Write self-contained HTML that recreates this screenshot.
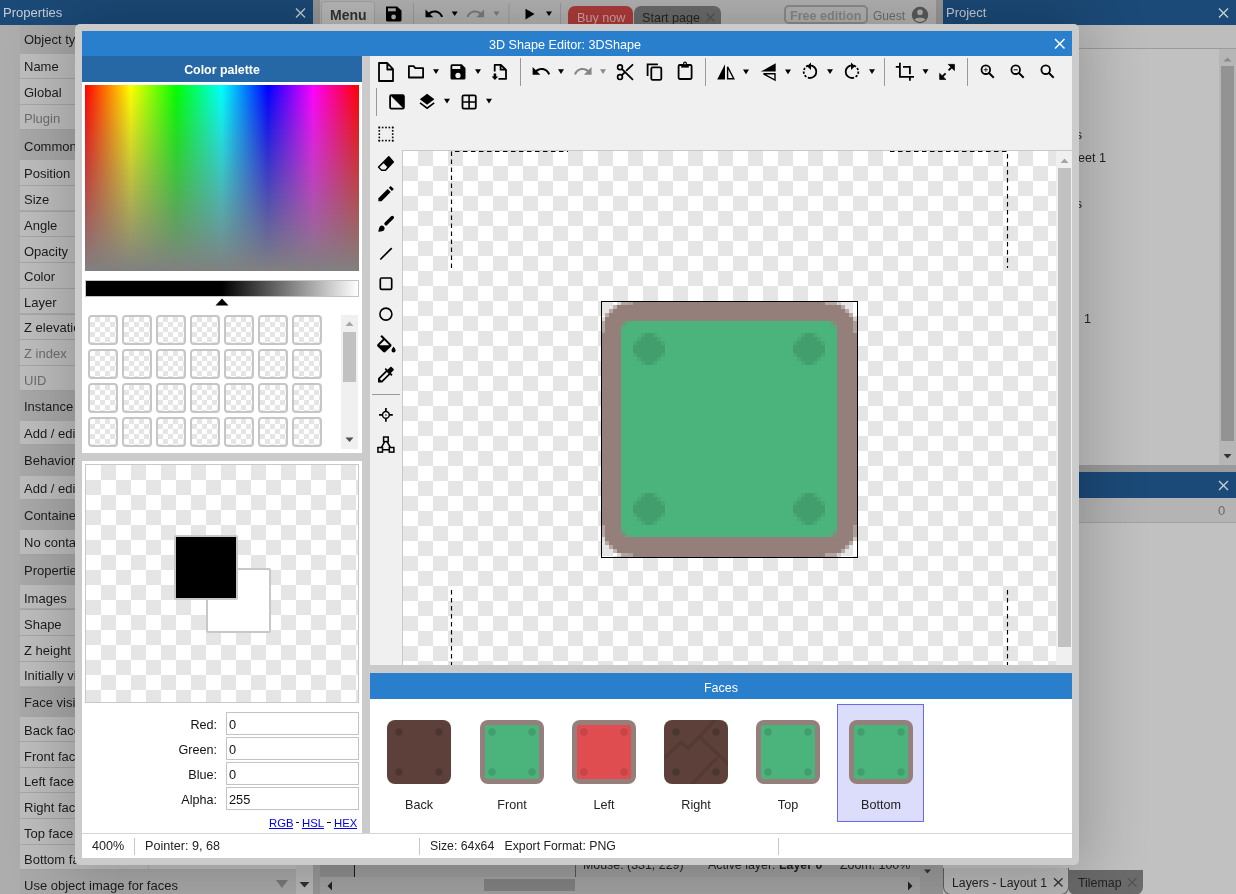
<!DOCTYPE html><html><head><meta charset="utf-8"><title>3D Shape Editor</title><style>
*{box-sizing:border-box;margin:0;padding:0}
html,body{width:1236px;height:894px;overflow:hidden}
body{position:relative;background:#bababa;font-family:"Liberation Sans",sans-serif;font-size:12.5px;color:#111}
.a{position:absolute}
.t{position:absolute;white-space:pre;line-height:1;will-change:transform}
.ph{position:absolute;background:#1b4a78}
.chk15{background:conic-gradient(#e5e5e5 0 25%,#fff 0 50%,#e5e5e5 0 75%,#fff 0) 0 0/30px 30px}
.chk5{background:conic-gradient(#e5e5e5 0 25%,#fff 0 50%,#e5e5e5 0 75%,#fff 0) 0 0/10px 10px}
</style></head><body>
<div class="a" style="left:0px;top:0px;width:313px;height:894px;background:#adadad"></div>
<div class="a" style="left:0px;top:0px;width:313px;height:25px;background:#1b4a78"></div>
<div class="t" style="left:3px;top:6px;color:#c8ced5;font-size:13px">Properties</div>
<div class="a" style="left:20px;top:24.5px;width:276px;height:29.299999999999997px;background:#a9a9a9"></div>
<div class="t" style="left:24px;top:32.9px;color:#1c1c1c;font-size:13px">Object type</div>
<div class="a" style="left:20px;top:53.8px;width:276px;height:24.400000000000006px;background:#bebebe"></div>
<div class="a" style="left:20px;top:78.2px;width:276px;height:1px;background:#a6a6a6"></div>
<div class="a" style="left:148px;top:53.8px;width:1px;height:24.400000000000006px;background:#aaaaaa"></div>
<div class="t" style="left:24px;top:60.3px;color:#1c1c1c;font-size:13px">Name</div>
<div class="a" style="left:20px;top:79.2px;width:276px;height:24.599999999999994px;background:#bebebe"></div>
<div class="a" style="left:20px;top:103.8px;width:276px;height:1px;background:#a6a6a6"></div>
<div class="a" style="left:148px;top:79.2px;width:1px;height:24.599999999999994px;background:#aaaaaa"></div>
<div class="t" style="left:24px;top:86.2px;color:#1c1c1c;font-size:13px">Global</div>
<div class="a" style="left:20px;top:104.8px;width:276px;height:24.60000000000001px;background:#bebebe"></div>
<div class="a" style="left:20px;top:129.4px;width:276px;height:1px;background:#a6a6a6"></div>
<div class="a" style="left:148px;top:104.8px;width:1px;height:24.60000000000001px;background:#aaaaaa"></div>
<div class="t" style="left:24px;top:112.1px;color:#6e6e6e;font-size:13px">Plugin</div>
<div class="a" style="left:20px;top:130.4px;width:276px;height:29.299999999999983px;background:#a9a9a9"></div>
<div class="t" style="left:24px;top:139.9px;color:#1c1c1c;font-size:13px">Common</div>
<div class="a" style="left:20px;top:159.7px;width:276px;height:25.100000000000023px;background:#bebebe"></div>
<div class="a" style="left:20px;top:184.8px;width:276px;height:1px;background:#a6a6a6"></div>
<div class="a" style="left:148px;top:159.7px;width:1px;height:25.100000000000023px;background:#aaaaaa"></div>
<div class="t" style="left:24px;top:166.7px;color:#1c1c1c;font-size:13px">Position</div>
<div class="a" style="left:20px;top:185.8px;width:276px;height:24.69999999999999px;background:#bebebe"></div>
<div class="a" style="left:20px;top:210.5px;width:276px;height:1px;background:#a6a6a6"></div>
<div class="a" style="left:148px;top:185.8px;width:1px;height:24.69999999999999px;background:#aaaaaa"></div>
<div class="t" style="left:24px;top:192.6px;color:#1c1c1c;font-size:13px">Size</div>
<div class="a" style="left:20px;top:211.5px;width:276px;height:24.5px;background:#bebebe"></div>
<div class="a" style="left:20px;top:236px;width:276px;height:1px;background:#a6a6a6"></div>
<div class="a" style="left:148px;top:211.5px;width:1px;height:24.5px;background:#aaaaaa"></div>
<div class="t" style="left:24px;top:219.3px;color:#1c1c1c;font-size:13px">Angle</div>
<div class="a" style="left:20px;top:237px;width:276px;height:25px;background:#bebebe"></div>
<div class="a" style="left:20px;top:262px;width:276px;height:1px;background:#a6a6a6"></div>
<div class="a" style="left:148px;top:237px;width:1px;height:25px;background:#aaaaaa"></div>
<div class="t" style="left:24px;top:244.8px;color:#1c1c1c;font-size:13px">Opacity</div>
<div class="a" style="left:20px;top:263px;width:276px;height:24.69999999999999px;background:#bebebe"></div>
<div class="a" style="left:20px;top:287.7px;width:276px;height:1px;background:#a6a6a6"></div>
<div class="a" style="left:148px;top:263px;width:1px;height:24.69999999999999px;background:#aaaaaa"></div>
<div class="t" style="left:24px;top:270.3px;color:#1c1c1c;font-size:13px">Color</div>
<div class="a" style="left:20px;top:288.7px;width:276px;height:24.80000000000001px;background:#bebebe"></div>
<div class="a" style="left:20px;top:313.5px;width:276px;height:1px;background:#a6a6a6"></div>
<div class="a" style="left:148px;top:288.7px;width:1px;height:24.80000000000001px;background:#aaaaaa"></div>
<div class="t" style="left:24px;top:296.2px;color:#1c1c1c;font-size:13px">Layer</div>
<div class="a" style="left:20px;top:314.5px;width:276px;height:24.399999999999977px;background:#bebebe"></div>
<div class="a" style="left:20px;top:338.9px;width:276px;height:1px;background:#a6a6a6"></div>
<div class="a" style="left:148px;top:314.5px;width:1px;height:24.399999999999977px;background:#aaaaaa"></div>
<div class="t" style="left:24px;top:321.3px;color:#1c1c1c;font-size:13px">Z elevation</div>
<div class="a" style="left:20px;top:339.9px;width:276px;height:24.900000000000034px;background:#bebebe"></div>
<div class="a" style="left:20px;top:364.8px;width:276px;height:1px;background:#a6a6a6"></div>
<div class="a" style="left:148px;top:339.9px;width:1px;height:24.900000000000034px;background:#aaaaaa"></div>
<div class="t" style="left:24px;top:347.2px;color:#6e6e6e;font-size:13px">Z index</div>
<div class="a" style="left:20px;top:365.8px;width:276px;height:24.599999999999966px;background:#bebebe"></div>
<div class="a" style="left:20px;top:390.4px;width:276px;height:1px;background:#a6a6a6"></div>
<div class="a" style="left:148px;top:365.8px;width:1px;height:24.599999999999966px;background:#aaaaaa"></div>
<div class="t" style="left:24px;top:373.6px;color:#6e6e6e;font-size:13px">UID</div>
<div class="a" style="left:20px;top:391.4px;width:276px;height:29.600000000000023px;background:#a9a9a9"></div>
<div class="t" style="left:24px;top:399.8px;color:#1c1c1c;font-size:13px">Instance variables</div>
<div class="a" style="left:20px;top:421px;width:276px;height:23.100000000000023px;background:#bebebe"></div>
<div class="a" style="left:20px;top:444.1px;width:276px;height:1px;background:#a6a6a6"></div>
<div class="a" style="left:148px;top:421px;width:1px;height:23.100000000000023px;background:#aaaaaa"></div>
<div class="t" style="left:24px;top:427.3px;color:#1c1c1c;font-size:13px">Add / edit</div>
<div class="a" style="left:20px;top:445.1px;width:276px;height:30.599999999999966px;background:#a9a9a9"></div>
<div class="t" style="left:24px;top:454.0px;color:#1c1c1c;font-size:13px">Behaviors</div>
<div class="a" style="left:20px;top:475.7px;width:276px;height:23.30000000000001px;background:#bebebe"></div>
<div class="a" style="left:20px;top:499px;width:276px;height:1px;background:#a6a6a6"></div>
<div class="a" style="left:148px;top:475.7px;width:1px;height:23.30000000000001px;background:#aaaaaa"></div>
<div class="t" style="left:24px;top:482.2px;color:#1c1c1c;font-size:13px">Add / edit</div>
<div class="a" style="left:20px;top:500px;width:276px;height:29.799999999999955px;background:#a9a9a9"></div>
<div class="t" style="left:24px;top:508.9px;color:#1c1c1c;font-size:13px">Container</div>
<div class="a" style="left:20px;top:529.8px;width:276px;height:24.200000000000045px;background:#bebebe"></div>
<div class="a" style="left:20px;top:554px;width:276px;height:1px;background:#a6a6a6"></div>
<div class="a" style="left:148px;top:529.8px;width:1px;height:24.200000000000045px;background:#aaaaaa"></div>
<div class="t" style="left:24px;top:536.3px;color:#1c1c1c;font-size:13px">No container</div>
<div class="a" style="left:20px;top:555px;width:276px;height:29.700000000000045px;background:#a9a9a9"></div>
<div class="t" style="left:24px;top:563.7px;color:#1c1c1c;font-size:13px">Properties</div>
<div class="a" style="left:20px;top:584.7px;width:276px;height:23.799999999999955px;background:#bebebe"></div>
<div class="a" style="left:20px;top:608.5px;width:276px;height:1px;background:#a6a6a6"></div>
<div class="a" style="left:148px;top:584.7px;width:1px;height:23.799999999999955px;background:#aaaaaa"></div>
<div class="t" style="left:24px;top:591.9px;color:#1c1c1c;font-size:13px">Images</div>
<div class="a" style="left:20px;top:609.5px;width:276px;height:25.200000000000045px;background:#bebebe"></div>
<div class="a" style="left:20px;top:634.7px;width:276px;height:1px;background:#a6a6a6"></div>
<div class="a" style="left:148px;top:609.5px;width:1px;height:25.200000000000045px;background:#aaaaaa"></div>
<div class="t" style="left:24px;top:617.9px;color:#1c1c1c;font-size:13px">Shape</div>
<div class="a" style="left:20px;top:635.7px;width:276px;height:24.899999999999977px;background:#bebebe"></div>
<div class="a" style="left:20px;top:660.6px;width:276px;height:1px;background:#a6a6a6"></div>
<div class="a" style="left:148px;top:635.7px;width:1px;height:24.899999999999977px;background:#aaaaaa"></div>
<div class="t" style="left:24px;top:643.8px;color:#1c1c1c;font-size:13px">Z height</div>
<div class="a" style="left:20px;top:661.6px;width:276px;height:24.899999999999977px;background:#bebebe"></div>
<div class="a" style="left:20px;top:686.5px;width:276px;height:1px;background:#a6a6a6"></div>
<div class="a" style="left:148px;top:661.6px;width:1px;height:24.899999999999977px;background:#aaaaaa"></div>
<div class="t" style="left:24px;top:668.9px;color:#1c1c1c;font-size:13px">Initially visible</div>
<div class="a" style="left:20px;top:687.5px;width:276px;height:29.5px;background:#a9a9a9"></div>
<div class="t" style="left:24px;top:696.3px;color:#1c1c1c;font-size:13px">Face visibility</div>
<div class="a" style="left:20px;top:717px;width:276px;height:24.200000000000045px;background:#bebebe"></div>
<div class="a" style="left:20px;top:741.2px;width:276px;height:1px;background:#a6a6a6"></div>
<div class="a" style="left:148px;top:717px;width:1px;height:24.200000000000045px;background:#aaaaaa"></div>
<div class="t" style="left:24px;top:724.4px;color:#1c1c1c;font-size:13px">Back face</div>
<div class="a" style="left:20px;top:742.2px;width:276px;height:24.399999999999977px;background:#bebebe"></div>
<div class="a" style="left:20px;top:766.6px;width:276px;height:1px;background:#a6a6a6"></div>
<div class="a" style="left:148px;top:742.2px;width:1px;height:24.399999999999977px;background:#aaaaaa"></div>
<div class="t" style="left:24px;top:749.5px;color:#1c1c1c;font-size:13px">Front face</div>
<div class="a" style="left:20px;top:767.6px;width:276px;height:24.600000000000023px;background:#bebebe"></div>
<div class="a" style="left:20px;top:792.2px;width:276px;height:1px;background:#a6a6a6"></div>
<div class="a" style="left:148px;top:767.6px;width:1px;height:24.600000000000023px;background:#aaaaaa"></div>
<div class="t" style="left:24px;top:775.4px;color:#1c1c1c;font-size:13px">Left face</div>
<div class="a" style="left:20px;top:793.2px;width:276px;height:24.59999999999991px;background:#bebebe"></div>
<div class="a" style="left:20px;top:817.8px;width:276px;height:1px;background:#a6a6a6"></div>
<div class="a" style="left:148px;top:793.2px;width:1px;height:24.59999999999991px;background:#aaaaaa"></div>
<div class="t" style="left:24px;top:801.3px;color:#1c1c1c;font-size:13px">Right face</div>
<div class="a" style="left:20px;top:818.8px;width:276px;height:24.800000000000068px;background:#bebebe"></div>
<div class="a" style="left:20px;top:843.6px;width:276px;height:1px;background:#a6a6a6"></div>
<div class="a" style="left:148px;top:818.8px;width:1px;height:24.800000000000068px;background:#aaaaaa"></div>
<div class="t" style="left:24px;top:827.2px;color:#1c1c1c;font-size:13px">Top face</div>
<div class="a" style="left:20px;top:844.6px;width:276px;height:24.299999999999955px;background:#bebebe"></div>
<div class="a" style="left:20px;top:868.9px;width:276px;height:1px;background:#a6a6a6"></div>
<div class="a" style="left:148px;top:844.6px;width:1px;height:24.299999999999955px;background:#aaaaaa"></div>
<div class="t" style="left:24px;top:853.0px;color:#1c1c1c;font-size:13px">Bottom face</div>
<div class="a" style="left:20px;top:869.9px;width:276px;height:24.100000000000023px;background:#a9a9a9"></div>
<div class="t" style="left:24px;top:879.0px;color:#1c1c1c;font-size:13px">Use object image for faces</div>
<div class="a" style="left:296px;top:25px;width:17px;height:869px;background:#b8b8b8"></div>
<div class="a" style="left:313px;top:0px;width:7px;height:894px;background:#9a9a9a"></div>
<div class="a" style="left:320px;top:0px;width:617px;height:24px;background:#b5b5b5"></div>
<div class="a" style="left:321px;top:1px;width:54px;height:24px;background:#bcbcbc;border:1px solid #a4a4a4;border-bottom:none;border-radius:4px 4px 0 0"></div>
<div class="t" style="left:330px;top:8px;font-weight:bold;color:#333;font-size:14px">Menu</div>
<div class="a" style="left:936px;top:0px;width:7px;height:894px;background:#9a9a9a"></div>
<div class="a" style="left:943px;top:0px;width:293px;height:894px;background:#c1c1c1"></div>
<div class="a" style="left:943px;top:0px;width:293px;height:25px;background:#1b4a78"></div>
<div class="t" style="left:946px;top:6px;color:#c8ced5;font-size:13px">Project</div>
<div class="a" style="left:568px;top:6px;width:65px;height:19px;background:#b03c3b;border-radius:7px 7px 0 0"></div>
<div class="t" style="left:577px;top:12px;color:#d9a6a5;font-size:12.6px">Buy now</div>
<div class="a" style="left:634px;top:6px;width:87px;height:19px;background:#6c6c6c;border-radius:7px 7px 0 0"></div>
<div class="t" style="left:642px;top:12px;color:#262626;font-size:12.6px">Start page</div>
<div class="a" style="left:784px;top:5px;width:84px;height:19px;border:2px solid #8e8e8e;border-radius:5px"></div>
<div class="t" style="left:790px;top:9.5px;color:#8a8a8a;font-size:12.6px;font-weight:bold">Free edition</div>
<div class="t" style="left:873px;top:9.5px;color:#6f6f6f;font-size:12px">Guest</div>
<svg class="a" style="left:0;top:0" width="1236" height="894" viewBox="0 0 1236 894"><path d="M413.5,3V24M509,3V24M560.5,3V24" stroke="#9e9e9e" stroke-width="1"/><path d="M386,6.5H397L401.5,10.5V20A1.5,1.5 0 0 1 400,21.5H387.5A1.5,1.5 0 0 1 386,20Z" fill="#000"/><rect x="388" y="8.3" width="7.8" height="3" fill="#b5b5b5"/><circle cx="393.6" cy="17" r="2.4" fill="#b5b5b5"/><g transform="translate(423.8,3.5) scale(0.86)"><path d="M12.5 8c-2.65 0-5.05.99-6.9 2.6L2 7v9h9l-3.62-3.62c1.39-1.16 3.16-1.88 5.12-1.88 3.54 0 6.55 2.31 7.6 5.5l2.37-.78C21.08 11.03 17.15 8 12.5 8z" fill="#000"/></g><path d="M451.7,11.5H457.7L454.7,16Z" fill="#000"/><g transform="translate(485.8,3.5) scale(-0.86,0.86)"><path d="M12.5 8c-2.65 0-5.05.99-6.9 2.6L2 7v9h9l-3.62-3.62c1.39-1.16 3.16-1.88 5.12-1.88 3.54 0 6.55 2.31 7.6 5.5l2.37-.78C21.08 11.03 17.15 8 12.5 8z" fill="#7e7e7e"/></g><path d="M493.5,11.5H499.5L496.5,16Z" fill="#808080"/><path d="M525.5,8.7L534.5,14L525.5,19.4Z" fill="#000"/><path d="M546,11.5H552L549,16Z" fill="#000"/><circle cx="920" cy="15" r="8.2" fill="#5b5b5b"/><circle cx="920" cy="12.2" r="2.8" fill="#b3b3b3"/><path d="M914.5,19.6C915.5,17.2 924.5,17.2 925.5,19.6C924,21.2 922.2,22 920,22C917.8,22 916,21.2 914.5,19.6Z" fill="#b3b3b3"/><path d="M706.5,13.5L714.5,21.5M714.5,13.5L706.5,21.5" stroke="#555" stroke-width="1.3"/></svg>
<div class="a" style="left:943px;top:25px;width:293px;height:24px;background:#bdbdbd;border-bottom:1px solid #9c9c9c"></div>
<div class="a" style="left:1219px;top:49px;width:17px;height:416px;background:#b6b6b6"></div>
<div class="a" style="left:1221px;top:66px;width:13px;height:375px;background:#939393"></div>
<svg class="a" style="left:1219px;top:49px" width="17" height="416"><path d="M4.5,12.5L8.5,8.5L12.5,12.5Z" fill="#8a8a8a"/><path d="M4.5,405L8.5,409.5L12.5,405Z" fill="#333"/></svg>
<div class="t" style="left:781.5px;width:300px;text-align:right;top:129px;color:#222;font-size:12.6px">Layouts</div>
<div class="t" style="left:806px;width:300px;text-align:right;top:152px;color:#222;font-size:12.6px">Event sheet 1</div>
<div class="t" style="left:781.5px;width:300px;text-align:right;top:198px;color:#222;font-size:12.6px">Object types</div>
<div class="t" style="left:780px;width:300px;text-align:right;top:221px;color:#222;font-size:12.6px">Timelines:</div>
<div class="t" style="left:1084px;top:313px;color:#222;font-size:12.6px">1</div>
<div class="a" style="left:943px;top:465px;width:293px;height:7px;background:#9b9b9b"></div>
<div class="a" style="left:943px;top:472px;width:293px;height:26px;background:#1b4a78"></div>
<div class="a" style="left:943px;top:498px;width:293px;height:25px;background:#b4b4b4;border-bottom:1px solid #a2a2a2"></div>
<div class="t" style="left:1217.5px;top:504px;color:#6a6a6a;font-size:13px">0</div>
<svg class="a" style="left:0;top:0" width="1236" height="894" viewBox="0 0 1236 894"><path d="M296,8.5L305,17.5M305,8.5L296,17.5" stroke="#c8ced5" stroke-width="1.4"/><path d="M1219,8.5L1228,17.5M1228,8.5L1219,17.5" stroke="#c8ced5" stroke-width="1.4"/><path d="M1219,481L1228,490M1228,481L1219,490" stroke="#c8ced5" stroke-width="1.4"/></svg>
<div class="a" style="left:943px;top:868px;width:126px;height:27px;background:#b7b7b7;border:1px solid #5e5e5e;border-top:none;border-radius:0 0 8px 8px"></div>
<div class="t" style="left:952px;top:877px;color:#222;font-size:12.3px">Layers - Layout 1</div>
<div class="a" style="left:1068px;top:870px;width:75px;height:25px;background:#6b6b6b;border-radius:0 0 8px 8px"></div>
<div class="t" style="left:1078px;top:877px;color:#222;font-size:12.4px">Tilemap</div>
<svg class="a" style="left:0;top:0" width="1236" height="894" viewBox="0 0 1236 894"><path d="M1054,878.3L1062.5,886.5M1062.5,878.3L1054,886.5" stroke="#333" stroke-width="1.3"/><path d="M1128,878.3L1136.5,886.5M1136.5,878.3L1128,886.5" stroke="#555" stroke-width="1.3"/></svg>
<div class="a" style="left:320px;top:865px;width:616px;height:12px;background:#9d9d9d"></div>
<div class="a" style="left:320px;top:865px;width:34px;height:12px;background:#8f8f8f"></div>
<div class="a" style="left:354px;top:865px;width:1px;height:12px;background:#1a1a1a"></div>
<div class="a" style="left:575px;top:865px;width:1px;height:12px;background:#555"></div>
<div class="t" style="left:583px;top:859px;color:#222;font-size:12.4px">Mouse: (331, 229)</div>
<div class="t" style="left:708px;top:859px;color:#222;font-size:12.4px">Active layer: <b>Layer 0</b></div>
<div class="t" style="left:840px;top:859px;color:#222;font-size:12.4px">Zoom: 100%</div>
<div class="a" style="left:320px;top:877px;width:600px;height:17px;background:#a3a3a3"></div>
<div class="a" style="left:484px;top:879px;width:91px;height:12px;background:#838383"></div>
<div class="a" style="left:920px;top:865px;width:16px;height:29px;background:#9a9a9a"></div>
<svg class="a" style="left:0;top:0" width="1236" height="894" viewBox="0 0 1236 894"><path d="M908,881.5L912.5,886L908,890.5Z" fill="#222"/><path d="M332,881.5V890.5L327.5,886Z" fill="#222"/><path d="M924,869.5H931L927.5,873.5Z" fill="#333"/><path d="M299.5,882H309.5L304.5,887.5Z" fill="#333"/><path d="M276,880H288L282,888Z" fill="#7a7a7a"/></svg>
<div class="a" style="left:75px;top:24px;width:1004px;height:841px;background:#cbcbcb;border-radius:5px;box-shadow:0 0 60px 12px rgba(0,0,0,0.2)"></div>
<div class="a" style="left:82px;top:31px;width:990px;height:25px;background:#2a7fcd"></div>
<div class="t" style="left:489px;top:39px;color:#fff;font-size:12.6px">3D Shape Editor: 3DShape</div>
<svg class="a" style="left:1050px;top:34px" width="20" height="20"><path d="M5,5L14.5,14.5M14.5,5L5,14.5" stroke="#fff" stroke-width="1.5"/></svg>
<div class="a" style="left:82px;top:56px;width:280px;height:26px;background:#2667a6"></div>
<div class="t" style="left:82px;top:64px;color:#fff;font-weight:bold;font-size:12.4px;width:280px;text-align:center">Color palette</div>
<div class="a" style="left:82px;top:82px;width:280px;height:371px;background:#fff"></div>
<div class="a" style="left:82px;top:461px;width:280px;height:372px;background:#fff"></div>
<div class="a" style="left:370px;top:56px;width:702px;height:95px;background:#f0f0f0"></div>
<div class="a" style="left:370px;top:151px;width:32px;height:514px;background:#f0f0f0"></div>
<div class="a" style="left:402px;top:150px;width:670px;height:515px;background:#c8c8c8"></div>
<div class="a" style="left:403px;top:151px;width:653px;height:514px;"></div>
<div class="a chk15" style="left:403px;top:151px;width:653px;height:514px"></div>
<div class="a" style="left:1056px;top:151px;width:16px;height:514px;background:#f0f0f0"></div>
<div class="a" style="left:370px;top:673px;width:702px;height:26px;background:#2a7fcd"></div>
<div class="t" style="left:370px;top:682px;color:#fff;font-size:12.5px;width:702px;text-align:center">Faces</div>
<div class="a" style="left:370px;top:699px;width:702px;height:134px;background:#fff"></div>
<div class="a" style="left:82px;top:833px;width:990px;height:25px;background:#fff;border-top:1px solid #d4d4d4"></div>
<div class="a" style="left:85px;top:85px;width:274px;height:186px;background:linear-gradient(to bottom,rgba(128,128,128,0) 0%,rgba(128,128,128,1) 100%),linear-gradient(to right,#f00 0%,#ff0 16.67%,#0f0 33.33%,#0ff 50%,#00f 66.67%,#f0f 83.33%,#f00 100%)"></div>
<div class="a" style="left:85px;top:280px;width:274px;height:17px;border:1px solid #c4c4c4;background:linear-gradient(to right,#000 0%,#000 50%,#fff 100%)"></div>
<svg class="a" style="left:214px;top:296px" width="16" height="10"><path d="M1.5,9.5L8,2.5L14.5,9.5Z" fill="#000"/></svg>
<div class="a chk5" style="left:88px;top:315px;width:30px;height:30px;border:2px solid #c6c6c6;border-radius:4px"></div>
<div class="a chk5" style="left:122px;top:315px;width:30px;height:30px;border:2px solid #c6c6c6;border-radius:4px"></div>
<div class="a chk5" style="left:156px;top:315px;width:30px;height:30px;border:2px solid #c6c6c6;border-radius:4px"></div>
<div class="a chk5" style="left:190px;top:315px;width:30px;height:30px;border:2px solid #c6c6c6;border-radius:4px"></div>
<div class="a chk5" style="left:224px;top:315px;width:30px;height:30px;border:2px solid #c6c6c6;border-radius:4px"></div>
<div class="a chk5" style="left:258px;top:315px;width:30px;height:30px;border:2px solid #c6c6c6;border-radius:4px"></div>
<div class="a chk5" style="left:292px;top:315px;width:30px;height:30px;border:2px solid #c6c6c6;border-radius:4px"></div>
<div class="a chk5" style="left:88px;top:349px;width:30px;height:30px;border:2px solid #c6c6c6;border-radius:4px"></div>
<div class="a chk5" style="left:122px;top:349px;width:30px;height:30px;border:2px solid #c6c6c6;border-radius:4px"></div>
<div class="a chk5" style="left:156px;top:349px;width:30px;height:30px;border:2px solid #c6c6c6;border-radius:4px"></div>
<div class="a chk5" style="left:190px;top:349px;width:30px;height:30px;border:2px solid #c6c6c6;border-radius:4px"></div>
<div class="a chk5" style="left:224px;top:349px;width:30px;height:30px;border:2px solid #c6c6c6;border-radius:4px"></div>
<div class="a chk5" style="left:258px;top:349px;width:30px;height:30px;border:2px solid #c6c6c6;border-radius:4px"></div>
<div class="a chk5" style="left:292px;top:349px;width:30px;height:30px;border:2px solid #c6c6c6;border-radius:4px"></div>
<div class="a chk5" style="left:88px;top:383px;width:30px;height:30px;border:2px solid #c6c6c6;border-radius:4px"></div>
<div class="a chk5" style="left:122px;top:383px;width:30px;height:30px;border:2px solid #c6c6c6;border-radius:4px"></div>
<div class="a chk5" style="left:156px;top:383px;width:30px;height:30px;border:2px solid #c6c6c6;border-radius:4px"></div>
<div class="a chk5" style="left:190px;top:383px;width:30px;height:30px;border:2px solid #c6c6c6;border-radius:4px"></div>
<div class="a chk5" style="left:224px;top:383px;width:30px;height:30px;border:2px solid #c6c6c6;border-radius:4px"></div>
<div class="a chk5" style="left:258px;top:383px;width:30px;height:30px;border:2px solid #c6c6c6;border-radius:4px"></div>
<div class="a chk5" style="left:292px;top:383px;width:30px;height:30px;border:2px solid #c6c6c6;border-radius:4px"></div>
<div class="a chk5" style="left:88px;top:417px;width:30px;height:30px;border:2px solid #c6c6c6;border-radius:4px"></div>
<div class="a chk5" style="left:122px;top:417px;width:30px;height:30px;border:2px solid #c6c6c6;border-radius:4px"></div>
<div class="a chk5" style="left:156px;top:417px;width:30px;height:30px;border:2px solid #c6c6c6;border-radius:4px"></div>
<div class="a chk5" style="left:190px;top:417px;width:30px;height:30px;border:2px solid #c6c6c6;border-radius:4px"></div>
<div class="a chk5" style="left:224px;top:417px;width:30px;height:30px;border:2px solid #c6c6c6;border-radius:4px"></div>
<div class="a chk5" style="left:258px;top:417px;width:30px;height:30px;border:2px solid #c6c6c6;border-radius:4px"></div>
<div class="a chk5" style="left:292px;top:417px;width:30px;height:30px;border:2px solid #c6c6c6;border-radius:4px"></div>
<div class="a" style="left:341px;top:315px;width:17px;height:134px;background:#f0f0f0"></div>
<div class="a" style="left:343px;top:332px;width:13px;height:50px;background:#c1c1c1"></div>
<svg class="a" style="left:341px;top:315px" width="17" height="134"><path d="M4.5,11L8.5,6.5L12.5,11Z" fill="#a6a6a6"/><path d="M4.5,122.5L8.5,127L12.5,122.5Z" fill="#505050"/></svg>
<div class="a" style="left:85px;top:464px;width:274px;height:239px;background:#c8c8c8"></div>
<div class="a" style="left:86px;top:465px;width:272px;height:237px;background:conic-gradient(#e5e5e5 0 25%,#fff 0 50%,#e5e5e5 0 75%,#fff 0) 0 0/30px 30px"></div>
<div class="a" style="left:206px;top:568px;width:65px;height:65px;background:#fff;border:2px solid #c8c8c8;border-radius:2px"></div>
<div class="a" style="left:174px;top:535px;width:64px;height:65px;background:#000;border:2px solid #c8c8c8;border-radius:2px"></div>
<div class="a" style="left:226px;top:712px;width:133px;height:23px;background:#fff;border:1px solid #c4c4c4"></div>
<div class="t" style="left:228.5px;top:719px;font-size:12.8px;color:#111">0</div>
<div class="t" style="left:117px;top:719px;font-size:12.6px;color:#111;width:100px;text-align:right">Red:</div>
<div class="a" style="left:226px;top:737px;width:133px;height:23px;background:#fff;border:1px solid #c4c4c4"></div>
<div class="t" style="left:228.5px;top:744px;font-size:12.8px;color:#111">0</div>
<div class="t" style="left:117px;top:744px;font-size:12.6px;color:#111;width:100px;text-align:right">Green:</div>
<div class="a" style="left:226px;top:762px;width:133px;height:23px;background:#fff;border:1px solid #c4c4c4"></div>
<div class="t" style="left:228.5px;top:769px;font-size:12.8px;color:#111">0</div>
<div class="t" style="left:117px;top:769px;font-size:12.6px;color:#111;width:100px;text-align:right">Blue:</div>
<div class="a" style="left:226px;top:787px;width:133px;height:23px;background:#fff;border:1px solid #c4c4c4"></div>
<div class="t" style="left:228.5px;top:794px;font-size:12.8px;color:#111">255</div>
<div class="t" style="left:117px;top:794px;font-size:12.6px;color:#111;width:100px;text-align:right">Alpha:</div>
<div class="t" style="left:269.3px;top:817.5px;font-size:11.3px;color:#0000ee">RGB</div>
<div class="a" style="left:269.3px;top:827.5px;width:23.4px;height:1px;background:#0000ee"></div>
<div class="t" style="left:302px;top:817.5px;font-size:11.3px;color:#0000ee">HSL</div>
<div class="a" style="left:302px;top:827.5px;width:22.1px;height:1px;background:#0000ee"></div>
<div class="t" style="left:333.7px;top:817.5px;font-size:11.3px;color:#0000ee">HEX</div>
<div class="a" style="left:333.7px;top:827.5px;width:23.3px;height:1px;background:#0000ee"></div>
<div class="a" style="left:295.7px;top:822px;width:3.6px;height:1.2px;background:#111"></div>
<div class="a" style="left:327.1px;top:822px;width:3.6px;height:1.2px;background:#111"></div>
<div class="a" style="left:134px;top:838px;width:1px;height:17px;background:#c8c8c8"></div>
<div class="a" style="left:419px;top:838px;width:1px;height:17px;background:#c8c8c8"></div>
<div class="a" style="left:778px;top:838px;width:1px;height:17px;background:#c8c8c8"></div>
<div class="t" style="left:92px;top:840px;font-size:12.6px;color:#222">400%</div>
<div class="t" style="left:145px;top:840px;font-size:12.6px;color:#222">Pointer: 9, 68</div>
<div class="t" style="left:430px;top:840px;font-size:12.3px;color:#222">Size: 64x64   Export Format: PNG</div>
<svg class="a" style="left:601px;top:301px" width="257" height="257" shape-rendering="crispEdges"><rect x="16" y="0" width="4" height="4" fill="#947f7a" fill-opacity="0.3"/><rect x="20" y="0" width="12" height="4" fill="#947f7a" fill-opacity="0.7"/><rect x="32" y="0" width="192" height="4" fill="#947f7a"/><rect x="224" y="0" width="12" height="4" fill="#947f7a" fill-opacity="0.7"/><rect x="236" y="0" width="4" height="4" fill="#947f7a" fill-opacity="0.3"/><rect x="12" y="4" width="4" height="4" fill="#947f7a" fill-opacity="0.6"/><rect x="16" y="4" width="224" height="4" fill="#947f7a"/><rect x="240" y="4" width="4" height="4" fill="#947f7a" fill-opacity="0.6"/><rect x="8" y="8" width="4" height="4" fill="#947f7a" fill-opacity="0.6"/><rect x="12" y="8" width="232" height="4" fill="#947f7a"/><rect x="244" y="8" width="4" height="4" fill="#947f7a" fill-opacity="0.6"/><rect x="4" y="12" width="4" height="4" fill="#947f7a" fill-opacity="0.6"/><rect x="8" y="12" width="240" height="4" fill="#947f7a"/><rect x="248" y="12" width="4" height="4" fill="#947f7a" fill-opacity="0.6"/><rect x="0" y="16" width="4" height="4" fill="#947f7a" fill-opacity="0.3"/><rect x="4" y="16" width="248" height="4" fill="#947f7a"/><rect x="252" y="16" width="4" height="4" fill="#947f7a" fill-opacity="0.3"/><rect x="0" y="20" width="4" height="4" fill="#947f7a" fill-opacity="0.7"/><rect x="4" y="20" width="16" height="4" fill="#947f7a"/><rect x="20" y="20" width="4" height="4" fill="#89877a"/><rect x="24" y="20" width="4" height="4" fill="#5ca77c"/><rect x="28" y="20" width="200" height="4" fill="#4bb37c"/><rect x="228" y="20" width="4" height="4" fill="#5ca77c"/><rect x="232" y="20" width="4" height="4" fill="#89877a"/><rect x="236" y="20" width="16" height="4" fill="#947f7a"/><rect x="252" y="20" width="4" height="4" fill="#947f7a" fill-opacity="0.7"/><rect x="0" y="24" width="4" height="4" fill="#947f7a" fill-opacity="0.7"/><rect x="4" y="24" width="16" height="4" fill="#947f7a"/><rect x="20" y="24" width="4" height="4" fill="#5ca77c"/><rect x="24" y="24" width="208" height="4" fill="#4bb37c"/><rect x="232" y="24" width="4" height="4" fill="#5ca77c"/><rect x="236" y="24" width="16" height="4" fill="#947f7a"/><rect x="252" y="24" width="4" height="4" fill="#947f7a" fill-opacity="0.7"/><rect x="0" y="28" width="4" height="4" fill="#947f7a" fill-opacity="0.7"/><rect x="4" y="28" width="16" height="4" fill="#947f7a"/><rect x="20" y="28" width="216" height="4" fill="#4bb37c"/><rect x="236" y="28" width="16" height="4" fill="#947f7a"/><rect x="252" y="28" width="4" height="4" fill="#947f7a" fill-opacity="0.7"/><rect x="0" y="32" width="20" height="4" fill="#947f7a"/><rect x="20" y="32" width="20" height="4" fill="#4bb37c"/><rect x="40" y="32" width="4" height="4" fill="#47aa75"/><rect x="44" y="32" width="8" height="4" fill="#429e6c"/><rect x="52" y="32" width="4" height="4" fill="#47aa75"/><rect x="56" y="32" width="144" height="4" fill="#4bb37c"/><rect x="200" y="32" width="4" height="4" fill="#47aa75"/><rect x="204" y="32" width="8" height="4" fill="#429e6c"/><rect x="212" y="32" width="4" height="4" fill="#47aa75"/><rect x="216" y="32" width="20" height="4" fill="#4bb37c"/><rect x="236" y="32" width="20" height="4" fill="#947f7a"/><rect x="0" y="36" width="20" height="4" fill="#947f7a"/><rect x="20" y="36" width="16" height="4" fill="#4bb37c"/><rect x="36" y="36" width="4" height="4" fill="#47aa75"/><rect x="40" y="36" width="16" height="4" fill="#429e6c"/><rect x="56" y="36" width="4" height="4" fill="#47aa75"/><rect x="60" y="36" width="136" height="4" fill="#4bb37c"/><rect x="196" y="36" width="4" height="4" fill="#47aa75"/><rect x="200" y="36" width="16" height="4" fill="#429e6c"/><rect x="216" y="36" width="4" height="4" fill="#47aa75"/><rect x="220" y="36" width="16" height="4" fill="#4bb37c"/><rect x="236" y="36" width="20" height="4" fill="#947f7a"/><rect x="0" y="40" width="20" height="4" fill="#947f7a"/><rect x="20" y="40" width="12" height="4" fill="#4bb37c"/><rect x="32" y="40" width="4" height="4" fill="#47aa75"/><rect x="36" y="40" width="24" height="4" fill="#429e6c"/><rect x="60" y="40" width="4" height="4" fill="#47aa75"/><rect x="64" y="40" width="128" height="4" fill="#4bb37c"/><rect x="192" y="40" width="4" height="4" fill="#47aa75"/><rect x="196" y="40" width="24" height="4" fill="#429e6c"/><rect x="220" y="40" width="4" height="4" fill="#47aa75"/><rect x="224" y="40" width="12" height="4" fill="#4bb37c"/><rect x="236" y="40" width="20" height="4" fill="#947f7a"/><rect x="0" y="44" width="20" height="4" fill="#947f7a"/><rect x="20" y="44" width="12" height="4" fill="#4bb37c"/><rect x="32" y="44" width="32" height="4" fill="#429e6c"/><rect x="64" y="44" width="128" height="4" fill="#4bb37c"/><rect x="192" y="44" width="32" height="4" fill="#429e6c"/><rect x="224" y="44" width="12" height="4" fill="#4bb37c"/><rect x="236" y="44" width="20" height="4" fill="#947f7a"/><rect x="0" y="48" width="20" height="4" fill="#947f7a"/><rect x="20" y="48" width="12" height="4" fill="#4bb37c"/><rect x="32" y="48" width="32" height="4" fill="#429e6c"/><rect x="64" y="48" width="128" height="4" fill="#4bb37c"/><rect x="192" y="48" width="32" height="4" fill="#429e6c"/><rect x="224" y="48" width="12" height="4" fill="#4bb37c"/><rect x="236" y="48" width="20" height="4" fill="#947f7a"/><rect x="0" y="52" width="20" height="4" fill="#947f7a"/><rect x="20" y="52" width="12" height="4" fill="#4bb37c"/><rect x="32" y="52" width="4" height="4" fill="#47aa75"/><rect x="36" y="52" width="24" height="4" fill="#429e6c"/><rect x="60" y="52" width="4" height="4" fill="#47aa75"/><rect x="64" y="52" width="128" height="4" fill="#4bb37c"/><rect x="192" y="52" width="4" height="4" fill="#47aa75"/><rect x="196" y="52" width="24" height="4" fill="#429e6c"/><rect x="220" y="52" width="4" height="4" fill="#47aa75"/><rect x="224" y="52" width="12" height="4" fill="#4bb37c"/><rect x="236" y="52" width="20" height="4" fill="#947f7a"/><rect x="0" y="56" width="20" height="4" fill="#947f7a"/><rect x="20" y="56" width="16" height="4" fill="#4bb37c"/><rect x="36" y="56" width="4" height="4" fill="#47aa75"/><rect x="40" y="56" width="16" height="4" fill="#429e6c"/><rect x="56" y="56" width="4" height="4" fill="#47aa75"/><rect x="60" y="56" width="136" height="4" fill="#4bb37c"/><rect x="196" y="56" width="4" height="4" fill="#47aa75"/><rect x="200" y="56" width="16" height="4" fill="#429e6c"/><rect x="216" y="56" width="4" height="4" fill="#47aa75"/><rect x="220" y="56" width="16" height="4" fill="#4bb37c"/><rect x="236" y="56" width="20" height="4" fill="#947f7a"/><rect x="0" y="60" width="20" height="4" fill="#947f7a"/><rect x="20" y="60" width="20" height="4" fill="#4bb37c"/><rect x="40" y="60" width="4" height="4" fill="#47aa75"/><rect x="44" y="60" width="8" height="4" fill="#429e6c"/><rect x="52" y="60" width="4" height="4" fill="#47aa75"/><rect x="56" y="60" width="144" height="4" fill="#4bb37c"/><rect x="200" y="60" width="4" height="4" fill="#47aa75"/><rect x="204" y="60" width="8" height="4" fill="#429e6c"/><rect x="212" y="60" width="4" height="4" fill="#47aa75"/><rect x="216" y="60" width="20" height="4" fill="#4bb37c"/><rect x="236" y="60" width="20" height="4" fill="#947f7a"/><rect x="0" y="64" width="20" height="4" fill="#947f7a"/><rect x="20" y="64" width="216" height="4" fill="#4bb37c"/><rect x="236" y="64" width="20" height="4" fill="#947f7a"/><rect x="0" y="68" width="20" height="4" fill="#947f7a"/><rect x="20" y="68" width="216" height="4" fill="#4bb37c"/><rect x="236" y="68" width="20" height="4" fill="#947f7a"/><rect x="0" y="72" width="20" height="4" fill="#947f7a"/><rect x="20" y="72" width="216" height="4" fill="#4bb37c"/><rect x="236" y="72" width="20" height="4" fill="#947f7a"/><rect x="0" y="76" width="20" height="4" fill="#947f7a"/><rect x="20" y="76" width="216" height="4" fill="#4bb37c"/><rect x="236" y="76" width="20" height="4" fill="#947f7a"/><rect x="0" y="80" width="20" height="4" fill="#947f7a"/><rect x="20" y="80" width="216" height="4" fill="#4bb37c"/><rect x="236" y="80" width="20" height="4" fill="#947f7a"/><rect x="0" y="84" width="20" height="4" fill="#947f7a"/><rect x="20" y="84" width="216" height="4" fill="#4bb37c"/><rect x="236" y="84" width="20" height="4" fill="#947f7a"/><rect x="0" y="88" width="20" height="4" fill="#947f7a"/><rect x="20" y="88" width="216" height="4" fill="#4bb37c"/><rect x="236" y="88" width="20" height="4" fill="#947f7a"/><rect x="0" y="92" width="20" height="4" fill="#947f7a"/><rect x="20" y="92" width="216" height="4" fill="#4bb37c"/><rect x="236" y="92" width="20" height="4" fill="#947f7a"/><rect x="0" y="96" width="20" height="4" fill="#947f7a"/><rect x="20" y="96" width="216" height="4" fill="#4bb37c"/><rect x="236" y="96" width="20" height="4" fill="#947f7a"/><rect x="0" y="100" width="20" height="4" fill="#947f7a"/><rect x="20" y="100" width="216" height="4" fill="#4bb37c"/><rect x="236" y="100" width="20" height="4" fill="#947f7a"/><rect x="0" y="104" width="20" height="4" fill="#947f7a"/><rect x="20" y="104" width="216" height="4" fill="#4bb37c"/><rect x="236" y="104" width="20" height="4" fill="#947f7a"/><rect x="0" y="108" width="20" height="4" fill="#947f7a"/><rect x="20" y="108" width="216" height="4" fill="#4bb37c"/><rect x="236" y="108" width="20" height="4" fill="#947f7a"/><rect x="0" y="112" width="20" height="4" fill="#947f7a"/><rect x="20" y="112" width="216" height="4" fill="#4bb37c"/><rect x="236" y="112" width="20" height="4" fill="#947f7a"/><rect x="0" y="116" width="20" height="4" fill="#947f7a"/><rect x="20" y="116" width="216" height="4" fill="#4bb37c"/><rect x="236" y="116" width="20" height="4" fill="#947f7a"/><rect x="0" y="120" width="20" height="4" fill="#947f7a"/><rect x="20" y="120" width="216" height="4" fill="#4bb37c"/><rect x="236" y="120" width="20" height="4" fill="#947f7a"/><rect x="0" y="124" width="20" height="4" fill="#947f7a"/><rect x="20" y="124" width="216" height="4" fill="#4bb37c"/><rect x="236" y="124" width="20" height="4" fill="#947f7a"/><rect x="0" y="128" width="20" height="4" fill="#947f7a"/><rect x="20" y="128" width="216" height="4" fill="#4bb37c"/><rect x="236" y="128" width="20" height="4" fill="#947f7a"/><rect x="0" y="132" width="20" height="4" fill="#947f7a"/><rect x="20" y="132" width="216" height="4" fill="#4bb37c"/><rect x="236" y="132" width="20" height="4" fill="#947f7a"/><rect x="0" y="136" width="20" height="4" fill="#947f7a"/><rect x="20" y="136" width="216" height="4" fill="#4bb37c"/><rect x="236" y="136" width="20" height="4" fill="#947f7a"/><rect x="0" y="140" width="20" height="4" fill="#947f7a"/><rect x="20" y="140" width="216" height="4" fill="#4bb37c"/><rect x="236" y="140" width="20" height="4" fill="#947f7a"/><rect x="0" y="144" width="20" height="4" fill="#947f7a"/><rect x="20" y="144" width="216" height="4" fill="#4bb37c"/><rect x="236" y="144" width="20" height="4" fill="#947f7a"/><rect x="0" y="148" width="20" height="4" fill="#947f7a"/><rect x="20" y="148" width="216" height="4" fill="#4bb37c"/><rect x="236" y="148" width="20" height="4" fill="#947f7a"/><rect x="0" y="152" width="20" height="4" fill="#947f7a"/><rect x="20" y="152" width="216" height="4" fill="#4bb37c"/><rect x="236" y="152" width="20" height="4" fill="#947f7a"/><rect x="0" y="156" width="20" height="4" fill="#947f7a"/><rect x="20" y="156" width="216" height="4" fill="#4bb37c"/><rect x="236" y="156" width="20" height="4" fill="#947f7a"/><rect x="0" y="160" width="20" height="4" fill="#947f7a"/><rect x="20" y="160" width="216" height="4" fill="#4bb37c"/><rect x="236" y="160" width="20" height="4" fill="#947f7a"/><rect x="0" y="164" width="20" height="4" fill="#947f7a"/><rect x="20" y="164" width="216" height="4" fill="#4bb37c"/><rect x="236" y="164" width="20" height="4" fill="#947f7a"/><rect x="0" y="168" width="20" height="4" fill="#947f7a"/><rect x="20" y="168" width="216" height="4" fill="#4bb37c"/><rect x="236" y="168" width="20" height="4" fill="#947f7a"/><rect x="0" y="172" width="20" height="4" fill="#947f7a"/><rect x="20" y="172" width="216" height="4" fill="#4bb37c"/><rect x="236" y="172" width="20" height="4" fill="#947f7a"/><rect x="0" y="176" width="20" height="4" fill="#947f7a"/><rect x="20" y="176" width="216" height="4" fill="#4bb37c"/><rect x="236" y="176" width="20" height="4" fill="#947f7a"/><rect x="0" y="180" width="20" height="4" fill="#947f7a"/><rect x="20" y="180" width="216" height="4" fill="#4bb37c"/><rect x="236" y="180" width="20" height="4" fill="#947f7a"/><rect x="0" y="184" width="20" height="4" fill="#947f7a"/><rect x="20" y="184" width="216" height="4" fill="#4bb37c"/><rect x="236" y="184" width="20" height="4" fill="#947f7a"/><rect x="0" y="188" width="20" height="4" fill="#947f7a"/><rect x="20" y="188" width="216" height="4" fill="#4bb37c"/><rect x="236" y="188" width="20" height="4" fill="#947f7a"/><rect x="0" y="192" width="20" height="4" fill="#947f7a"/><rect x="20" y="192" width="20" height="4" fill="#4bb37c"/><rect x="40" y="192" width="4" height="4" fill="#47aa75"/><rect x="44" y="192" width="8" height="4" fill="#429e6c"/><rect x="52" y="192" width="4" height="4" fill="#47aa75"/><rect x="56" y="192" width="144" height="4" fill="#4bb37c"/><rect x="200" y="192" width="4" height="4" fill="#47aa75"/><rect x="204" y="192" width="8" height="4" fill="#429e6c"/><rect x="212" y="192" width="4" height="4" fill="#47aa75"/><rect x="216" y="192" width="20" height="4" fill="#4bb37c"/><rect x="236" y="192" width="20" height="4" fill="#947f7a"/><rect x="0" y="196" width="20" height="4" fill="#947f7a"/><rect x="20" y="196" width="16" height="4" fill="#4bb37c"/><rect x="36" y="196" width="4" height="4" fill="#47aa75"/><rect x="40" y="196" width="16" height="4" fill="#429e6c"/><rect x="56" y="196" width="4" height="4" fill="#47aa75"/><rect x="60" y="196" width="136" height="4" fill="#4bb37c"/><rect x="196" y="196" width="4" height="4" fill="#47aa75"/><rect x="200" y="196" width="16" height="4" fill="#429e6c"/><rect x="216" y="196" width="4" height="4" fill="#47aa75"/><rect x="220" y="196" width="16" height="4" fill="#4bb37c"/><rect x="236" y="196" width="20" height="4" fill="#947f7a"/><rect x="0" y="200" width="20" height="4" fill="#947f7a"/><rect x="20" y="200" width="12" height="4" fill="#4bb37c"/><rect x="32" y="200" width="4" height="4" fill="#47aa75"/><rect x="36" y="200" width="24" height="4" fill="#429e6c"/><rect x="60" y="200" width="4" height="4" fill="#47aa75"/><rect x="64" y="200" width="128" height="4" fill="#4bb37c"/><rect x="192" y="200" width="4" height="4" fill="#47aa75"/><rect x="196" y="200" width="24" height="4" fill="#429e6c"/><rect x="220" y="200" width="4" height="4" fill="#47aa75"/><rect x="224" y="200" width="12" height="4" fill="#4bb37c"/><rect x="236" y="200" width="20" height="4" fill="#947f7a"/><rect x="0" y="204" width="20" height="4" fill="#947f7a"/><rect x="20" y="204" width="12" height="4" fill="#4bb37c"/><rect x="32" y="204" width="32" height="4" fill="#429e6c"/><rect x="64" y="204" width="128" height="4" fill="#4bb37c"/><rect x="192" y="204" width="32" height="4" fill="#429e6c"/><rect x="224" y="204" width="12" height="4" fill="#4bb37c"/><rect x="236" y="204" width="20" height="4" fill="#947f7a"/><rect x="0" y="208" width="20" height="4" fill="#947f7a"/><rect x="20" y="208" width="12" height="4" fill="#4bb37c"/><rect x="32" y="208" width="32" height="4" fill="#429e6c"/><rect x="64" y="208" width="128" height="4" fill="#4bb37c"/><rect x="192" y="208" width="32" height="4" fill="#429e6c"/><rect x="224" y="208" width="12" height="4" fill="#4bb37c"/><rect x="236" y="208" width="20" height="4" fill="#947f7a"/><rect x="0" y="212" width="20" height="4" fill="#947f7a"/><rect x="20" y="212" width="12" height="4" fill="#4bb37c"/><rect x="32" y="212" width="4" height="4" fill="#47aa75"/><rect x="36" y="212" width="24" height="4" fill="#429e6c"/><rect x="60" y="212" width="4" height="4" fill="#47aa75"/><rect x="64" y="212" width="128" height="4" fill="#4bb37c"/><rect x="192" y="212" width="4" height="4" fill="#47aa75"/><rect x="196" y="212" width="24" height="4" fill="#429e6c"/><rect x="220" y="212" width="4" height="4" fill="#47aa75"/><rect x="224" y="212" width="12" height="4" fill="#4bb37c"/><rect x="236" y="212" width="20" height="4" fill="#947f7a"/><rect x="0" y="216" width="20" height="4" fill="#947f7a"/><rect x="20" y="216" width="16" height="4" fill="#4bb37c"/><rect x="36" y="216" width="4" height="4" fill="#47aa75"/><rect x="40" y="216" width="16" height="4" fill="#429e6c"/><rect x="56" y="216" width="4" height="4" fill="#47aa75"/><rect x="60" y="216" width="136" height="4" fill="#4bb37c"/><rect x="196" y="216" width="4" height="4" fill="#47aa75"/><rect x="200" y="216" width="16" height="4" fill="#429e6c"/><rect x="216" y="216" width="4" height="4" fill="#47aa75"/><rect x="220" y="216" width="16" height="4" fill="#4bb37c"/><rect x="236" y="216" width="20" height="4" fill="#947f7a"/><rect x="0" y="220" width="20" height="4" fill="#947f7a"/><rect x="20" y="220" width="20" height="4" fill="#4bb37c"/><rect x="40" y="220" width="4" height="4" fill="#47aa75"/><rect x="44" y="220" width="8" height="4" fill="#429e6c"/><rect x="52" y="220" width="4" height="4" fill="#47aa75"/><rect x="56" y="220" width="144" height="4" fill="#4bb37c"/><rect x="200" y="220" width="4" height="4" fill="#47aa75"/><rect x="204" y="220" width="8" height="4" fill="#429e6c"/><rect x="212" y="220" width="4" height="4" fill="#47aa75"/><rect x="216" y="220" width="20" height="4" fill="#4bb37c"/><rect x="236" y="220" width="20" height="4" fill="#947f7a"/><rect x="0" y="224" width="4" height="4" fill="#947f7a" fill-opacity="0.7"/><rect x="4" y="224" width="16" height="4" fill="#947f7a"/><rect x="20" y="224" width="216" height="4" fill="#4bb37c"/><rect x="236" y="224" width="16" height="4" fill="#947f7a"/><rect x="252" y="224" width="4" height="4" fill="#947f7a" fill-opacity="0.7"/><rect x="0" y="228" width="4" height="4" fill="#947f7a" fill-opacity="0.7"/><rect x="4" y="228" width="16" height="4" fill="#947f7a"/><rect x="20" y="228" width="4" height="4" fill="#5ca77c"/><rect x="24" y="228" width="208" height="4" fill="#4bb37c"/><rect x="232" y="228" width="4" height="4" fill="#5ca77c"/><rect x="236" y="228" width="16" height="4" fill="#947f7a"/><rect x="252" y="228" width="4" height="4" fill="#947f7a" fill-opacity="0.7"/><rect x="0" y="232" width="4" height="4" fill="#947f7a" fill-opacity="0.7"/><rect x="4" y="232" width="16" height="4" fill="#947f7a"/><rect x="20" y="232" width="4" height="4" fill="#89877a"/><rect x="24" y="232" width="4" height="4" fill="#5ca77c"/><rect x="28" y="232" width="200" height="4" fill="#4bb37c"/><rect x="228" y="232" width="4" height="4" fill="#5ca77c"/><rect x="232" y="232" width="4" height="4" fill="#89877a"/><rect x="236" y="232" width="16" height="4" fill="#947f7a"/><rect x="252" y="232" width="4" height="4" fill="#947f7a" fill-opacity="0.7"/><rect x="0" y="236" width="4" height="4" fill="#947f7a" fill-opacity="0.3"/><rect x="4" y="236" width="248" height="4" fill="#947f7a"/><rect x="252" y="236" width="4" height="4" fill="#947f7a" fill-opacity="0.3"/><rect x="4" y="240" width="4" height="4" fill="#947f7a" fill-opacity="0.6"/><rect x="8" y="240" width="240" height="4" fill="#947f7a"/><rect x="248" y="240" width="4" height="4" fill="#947f7a" fill-opacity="0.6"/><rect x="8" y="244" width="4" height="4" fill="#947f7a" fill-opacity="0.6"/><rect x="12" y="244" width="232" height="4" fill="#947f7a"/><rect x="244" y="244" width="4" height="4" fill="#947f7a" fill-opacity="0.6"/><rect x="12" y="248" width="4" height="4" fill="#947f7a" fill-opacity="0.6"/><rect x="16" y="248" width="224" height="4" fill="#947f7a"/><rect x="240" y="248" width="4" height="4" fill="#947f7a" fill-opacity="0.6"/><rect x="16" y="252" width="4" height="4" fill="#947f7a" fill-opacity="0.3"/><rect x="20" y="252" width="12" height="4" fill="#947f7a" fill-opacity="0.7"/><rect x="32" y="252" width="192" height="4" fill="#947f7a"/><rect x="224" y="252" width="12" height="4" fill="#947f7a" fill-opacity="0.7"/><rect x="236" y="252" width="4" height="4" fill="#947f7a" fill-opacity="0.3"/><rect x="0.5" y="0.5" width="256" height="256" fill="none" stroke="#000" stroke-width="1"/></svg>
<svg class="a" style="left:403px;top:151px" width="653" height="514"><path d="M48.5,117V0.5H165 M487,0.5H604.5V117 M48.5,439V514 M604.5,439V514" stroke="#000" stroke-width="1.15" fill="none" stroke-dasharray="4.5,3.5"/></svg>
<div class="a" style="left:1058px;top:168px;width:13px;height:479px;background:#c1c1c1"></div>
<svg class="a" style="left:1056px;top:151px" width="16" height="20"><path d="M4.5,12L8.5,7.5L12.5,12Z" fill="#a6a6a6"/></svg>
<div class="a" style="left:837px;top:704px;width:87px;height:118px;background:#dcdcfb;border:1px solid #6a6af0"></div>
<svg class="a" style="left:387px;top:720px" width="64" height="64"><rect x="0" y="0" width="64" height="64" rx="8" fill="#5d4039"/><circle cx="12" cy="12" r="3.7" fill="#4b3632"/><circle cx="52" cy="12" r="3.7" fill="#4b3632"/><circle cx="12" cy="52" r="3.7" fill="#4b3632"/><circle cx="52" cy="52" r="3.7" fill="#4b3632"/></svg>
<div class="t" style="left:369px;top:799px;font-size:12.6px;color:#222;width:100px;text-align:center">Back</div>
<svg class="a" style="left:480px;top:720px" width="64" height="64"><rect x="0" y="0" width="64" height="64" rx="8" fill="#947f7a"/><rect x="5" y="5" width="54" height="54" rx="2.5" fill="#4bb37c"/><circle cx="12" cy="12" r="3.7" fill="#429e6c"/><circle cx="52" cy="12" r="3.7" fill="#429e6c"/><circle cx="12" cy="52" r="3.7" fill="#429e6c"/><circle cx="52" cy="52" r="3.7" fill="#429e6c"/></svg>
<div class="t" style="left:462px;top:799px;font-size:12.6px;color:#222;width:100px;text-align:center">Front</div>
<svg class="a" style="left:572px;top:720px" width="64" height="64"><rect x="0" y="0" width="64" height="64" rx="8" fill="#947f7a"/><rect x="5" y="5" width="54" height="54" rx="2.5" fill="#e04d50"/><circle cx="12" cy="12" r="3.7" fill="#c74549"/><circle cx="52" cy="12" r="3.7" fill="#c74549"/><circle cx="12" cy="52" r="3.7" fill="#c74549"/><circle cx="52" cy="52" r="3.7" fill="#c74549"/></svg>
<div class="t" style="left:554px;top:799px;font-size:12.6px;color:#222;width:100px;text-align:center">Left</div>
<svg class="a" style="left:664px;top:720px" width="64" height="64"><rect x="0" y="0" width="64" height="64" rx="8" fill="#5d4039"/><clipPath id="rc"><rect x="0" y="0" width="64" height="64" rx="8"/></clipPath><g clip-path="url(#rc)" stroke="#533a34" stroke-width="3.2" fill="none"><path d="M-1,39L17,22.5L24,28.5L52,-1"/><path d="M36,17L66,46"/><path d="M26,66L53,38"/></g><circle cx="12" cy="12" r="3.7" fill="#4b3632"/><circle cx="52" cy="12" r="3.7" fill="#4b3632"/><circle cx="12" cy="52" r="3.7" fill="#4b3632"/><circle cx="52" cy="52" r="3.7" fill="#4b3632"/></svg>
<div class="t" style="left:646px;top:799px;font-size:12.6px;color:#222;width:100px;text-align:center">Right</div>
<svg class="a" style="left:756px;top:720px" width="64" height="64"><rect x="0" y="0" width="64" height="64" rx="8" fill="#947f7a"/><rect x="5" y="5" width="54" height="54" rx="2.5" fill="#4bb37c"/><circle cx="12" cy="12" r="3.7" fill="#429e6c"/><circle cx="52" cy="12" r="3.7" fill="#429e6c"/><circle cx="12" cy="52" r="3.7" fill="#429e6c"/><circle cx="52" cy="52" r="3.7" fill="#429e6c"/></svg>
<div class="t" style="left:738px;top:799px;font-size:12.6px;color:#222;width:100px;text-align:center">Top</div>
<svg class="a" style="left:849px;top:720px" width="64" height="64"><rect x="0" y="0" width="64" height="64" rx="8" fill="#947f7a"/><rect x="5" y="5" width="54" height="54" rx="2.5" fill="#4bb37c"/><circle cx="12" cy="12" r="3.7" fill="#429e6c"/><circle cx="52" cy="12" r="3.7" fill="#429e6c"/><circle cx="12" cy="52" r="3.7" fill="#429e6c"/><circle cx="52" cy="52" r="3.7" fill="#429e6c"/></svg>
<div class="t" style="left:831px;top:799px;font-size:12.6px;color:#222;width:100px;text-align:center">Bottom</div>
<svg class="a" style="left:0;top:0" width="1236" height="894" viewBox="0 0 1236 894"><path d="M520.5,58V86M705.5,58V86M884.5,58V86M967.5,58V86M376.5,88V116" stroke="#9a9a9a" stroke-width="1"/><path d="M379,63H387.3L393,69.2V81H379Z M387.3,63V69.5H393" stroke="#000" fill="none" stroke-width="1.8" stroke-linejoin="round"/><path d="M408.9,66.2H413.6L415.3,68.2H423.1V77.5H408.9Z" stroke="#000" fill="none" stroke-width="1.8" stroke-linejoin="round"/><path d="M433,69.2H439L436,74.0Z" fill="#000"/><path d="M452,64.2H461.8L465.5,68V78A1.5,1.5 0 0 1 464,79.5H452A1.5,1.5 0 0 1 450.5,78V65.7A1.5,1.5 0 0 1 452,64.2Z" fill="#000"/><rect x="452.3" y="66" width="8" height="3" fill="#f0f0f0"/><circle cx="458" cy="75.4" r="2.6" fill="#f0f0f0"/><path d="M475,69.2H481L478,74.0Z" fill="#000"/><path d="M494.7,71.5V64.9H500.9L506,70V78.9H498.5 M500.6,64.9V69.7H506" stroke="#000" fill="none" stroke-width="1.8" stroke-linejoin="round"/><path d="M493.6,73.5H496.2V76.5H498.2L494.9,80L491.6,76.5H493.6Z" fill="#000"/><g transform="translate(530.9,61) scale(0.86)"><path d="M12.5 8c-2.65 0-5.05.99-6.9 2.6L2 7v9h9l-3.62-3.62c1.39-1.16 3.16-1.88 5.12-1.88 3.54 0 6.55 2.31 7.6 5.5l2.37-.78C21.08 11.03 17.15 8 12.5 8z" fill="#000"/></g><path d="M558,69.2H564L561,74.0Z" fill="#000"/><g transform="translate(593.3,61) scale(-0.86,0.86)"><path d="M12.5 8c-2.65 0-5.05.99-6.9 2.6L2 7v9h9l-3.62-3.62c1.39-1.16 3.16-1.88 5.12-1.88 3.54 0 6.55 2.31 7.6 5.5l2.37-.78C21.08 11.03 17.15 8 12.5 8z" fill="#858585"/></g><path d="M600,69.2H606L603,74.0Z" fill="#8a8a8a"/><circle cx="620" cy="67.2" r="2.4" stroke="#000" fill="none" stroke-width="1.7"/><circle cx="620" cy="77.1" r="2.4" stroke="#000" fill="none" stroke-width="1.7"/><path d="M622,69.2L632.5,79.4M622,75L624.8,72.3M626.6,70.4L632.5,64.8" stroke="#000" stroke-width="1.8" stroke-linecap="round"/><path d="M647.6,76V64.3H657.9" stroke="#000" fill="none" stroke-width="1.8"/><rect x="651.3" y="67.3" width="10" height="12.5" rx="1.4" stroke="#000" fill="none" stroke-width="1.8"/><rect x="678.6" y="65" width="13" height="14" rx="1.2" stroke="#000" fill="none" stroke-width="1.8"/><path d="M681.2,64.3H688.8V67.6H681.2Z" fill="#000"/><circle cx="685" cy="63.6" r="2" fill="#000"/><circle cx="685" cy="63.6" r="0.8" fill="#f0f0f0"/><path d="M717.2,79.4L725,64.3V79.4Z" fill="#000"/><path d="M727.6,66.8V78.7H733.8Z" stroke="#000" fill="none" stroke-width="1.4" stroke-linejoin="miter"/><path d="M743,69.5H749L746,74.3Z" fill="#000"/><path d="M760.8,71.6L775.7,63.3V71.6Z" fill="#000"/><path d="M763.5,73.8H775V80Z" stroke="#000" fill="none" stroke-width="1.4"/><path d="M785,69.5H791L788,74.3Z" fill="#000"/><path d="M810,65.4A6.3,6.3 0 0 1 810,78" stroke="#000" fill="none" stroke-width="1.8"/><path d="M810,78A6.3,6.3 0 0 1 810,65.4" stroke="#000" fill="none" stroke-width="1.8" stroke-dasharray="2.2,1.6"/><path d="M807,66.2L811,62.4V70Z" fill="#000"/><path d="M827,69.2H833L830,74.0Z" fill="#000"/><path d="M852,65.4A6.3,6.3 0 0 0 852,78" stroke="#000" fill="none" stroke-width="1.8"/><path d="M852,78A6.3,6.3 0 0 0 852,65.4" stroke="#000" fill="none" stroke-width="1.8" stroke-dasharray="2.2,1.6"/><path d="M855,66.2L851,62.4V70Z" fill="#000"/><path d="M869,69.2H875L872,74.0Z" fill="#000"/><path d="M899.9,62.8V76.8H914M895.8,66.8H899.9M903,66.8H909.9V74.2M909.9,76.8V80.8" stroke="#000" fill="none" stroke-width="1.8"/><path d="M922.5,69.2H928.5L925.5,74.0Z" fill="#000"/><path d="M948.6,70.3L953.5,65.4M945.6,73.4L940.6,78.4" stroke="#000" stroke-width="1.9"/><path d="M948.3,64.4H954.4V70.5Z M939.7,73.4V79.4H945.8Z" fill="#000" stroke="#000" stroke-width="0.8" stroke-linejoin="round"/><circle cx="985.8" cy="69.7" r="4.3" stroke="#000" fill="none" stroke-width="1.8"/><path d="M988.8,72.7L993.8,77.7" stroke="#000" stroke-width="2"/><path d="M983.8,69.7H987.8M985.8,67.7V71.7" stroke="#444" stroke-width="1.2"/><circle cx="1015.7" cy="69.7" r="4.3" stroke="#000" fill="none" stroke-width="1.8"/><path d="M1018.7,72.7L1023.7,77.7" stroke="#000" stroke-width="2"/><path d="M1013.7,69.7H1017.7" stroke="#444" stroke-width="1.4"/><circle cx="1045.7" cy="69.7" r="4.3" stroke="#000" fill="none" stroke-width="1.8"/><path d="M1048.7,72.7L1053.7,77.7" stroke="#000" stroke-width="2"/><rect x="390.1" y="95.2" width="13.8" height="13.4" rx="1.3" stroke="#000" fill="none" stroke-width="1.8"/><path d="M390.5,95.5H403.5V108.5Z" fill="#000"/><path d="M419.8,99.3L427.1,93.8L434.4,99.3L427.1,104.8Z" fill="#000"/><path d="M420,102.9L427.1,108.2L434.2,102.9" stroke="#000" fill="none" stroke-width="1.6"/><path d="M444,98.8H450L447,103.6Z" fill="#000"/><rect x="462.5" y="95.3" width="13.3" height="13.3" rx="1.3" stroke="#000" fill="none" stroke-width="1.8"/><path d="M469.1,95.3V108.6M462.5,101.95H475.8" stroke="#000" stroke-width="1.6"/><path d="M486,98.8H492L489,103.6Z" fill="#000"/><g fill="#000"><rect x="378.50" y="126.70" width="1.6" height="1.6"/><rect x="378.50" y="139.80" width="1.6" height="1.6"/><rect x="378.50" y="126.70" width="1.6" height="1.6"/><rect x="391.90" y="126.70" width="1.6" height="1.6"/><rect x="381.85" y="126.70" width="1.6" height="1.6"/><rect x="381.85" y="139.80" width="1.6" height="1.6"/><rect x="378.50" y="130.00" width="1.6" height="1.6"/><rect x="391.90" y="130.00" width="1.6" height="1.6"/><rect x="385.20" y="126.70" width="1.6" height="1.6"/><rect x="385.20" y="139.80" width="1.6" height="1.6"/><rect x="378.50" y="133.30" width="1.6" height="1.6"/><rect x="391.90" y="133.30" width="1.6" height="1.6"/><rect x="388.55" y="126.70" width="1.6" height="1.6"/><rect x="388.55" y="139.80" width="1.6" height="1.6"/><rect x="378.50" y="136.60" width="1.6" height="1.6"/><rect x="391.90" y="136.60" width="1.6" height="1.6"/><rect x="391.90" y="126.70" width="1.6" height="1.6"/><rect x="391.90" y="139.80" width="1.6" height="1.6"/><rect x="378.50" y="139.90" width="1.6" height="1.6"/><rect x="391.90" y="139.90" width="1.6" height="1.6"/></g><path d="M388.5,156.1Q389,155.9 389.4,156.3L393.9,161.6Q394.2,162 393.9,162.4L385.8,171H381.4L377.9,167.6Q377.5,167.2 377.9,166.8Z M383.6,163.2L387.2,166.9L385.3,169.4H381.8L379.5,167.2Z" fill="#000" fill-rule="evenodd"/><path d="M378.4,201.2V198.2L387.6,189L390.7,192.1L381.5,201.2Z" fill="#000"/><path d="M388.8,187.8L390.7,185.9L393.8,189L391.9,190.9Z" fill="#000"/><path d="M386,223.8L392.3,217.5" stroke="#000" stroke-width="3.4" stroke-linecap="round"/><path d="M381.7,225.6C383.5,225.6 384.8,227 384.6,228.8C384.3,231 382.3,231.8 378.3,231.8C378.9,229.5 379.2,225.6 381.7,225.6Z" fill="#000"/><path d="M380.3,259.5L391.7,248.1" stroke="#000" stroke-width="1.7"/><rect x="380.3" y="278" width="11.4" height="11.4" rx="1.4" stroke="#000" fill="none" stroke-width="1.7"/><circle cx="385.9" cy="314.1" r="6" stroke="#000" fill="none" stroke-width="1.6"/><g transform="translate(374,335) scale(1.03)"><path d="M19,11.5C19,11.5 17,13.67 17,15A2,2 0 0,0 19,17A2,2 0 0,0 21,15C21,13.67 19,11.5 19,11.5M5.21,10L10,5.21L14.79,10M16.56,8.94L7.62,0L6.21,1.41L8.59,3.79L3.44,8.94C2.85,9.5 2.85,10.47 3.44,11.06L8.94,16.56C9.23,16.85 9.62,17 10,17C10.38,17 10.77,16.85 11.06,16.56L16.56,11.06C17.15,10.47 17.15,9.5 16.56,8.94Z" fill="#000"/></g><g transform="translate(375.4,364) scale(0.88)"><path d="M6.92,19L5,17.08L13.06,9L15,10.94M20.71,5.63L18.37,3.29C18,2.9 17.35,2.9 16.96,3.29L13.84,6.41L11.91,4.5L10.5,5.91L11.92,7.33L3,16.25V21H7.75L16.67,12.08L18.09,13.5L19.5,12.09L17.58,10.17L20.7,7.05C21.1,6.65 21.1,6 20.71,5.63Z" fill="#000"/></g><path d="M372,394.5H400" stroke="#9a9a9a" stroke-width="1"/><circle cx="385.9" cy="414.9" r="3.4" stroke="#000" fill="none" stroke-width="1.5"/><circle cx="385.9" cy="414.9" r="0.9" fill="#555"/><path d="M385.9,408V411.2M385.9,418.6V421.8M379,414.9H382.2M389.6,414.9H392.8" stroke="#000" stroke-width="1.7"/><path d="M385.9,439.3L380.2,449.8H391.6Z" stroke="#000" fill="none" stroke-width="1.5"/><rect x="383.59999999999997" y="437.0" width="4.6" height="4.6" fill="#f0f0f0" stroke="#000" stroke-width="1.5"/><rect x="377.9" y="447.5" width="4.6" height="4.6" fill="#f0f0f0" stroke="#000" stroke-width="1.5"/><rect x="389.3" y="447.5" width="4.6" height="4.6" fill="#f0f0f0" stroke="#000" stroke-width="1.5"/></svg>
</body></html>
